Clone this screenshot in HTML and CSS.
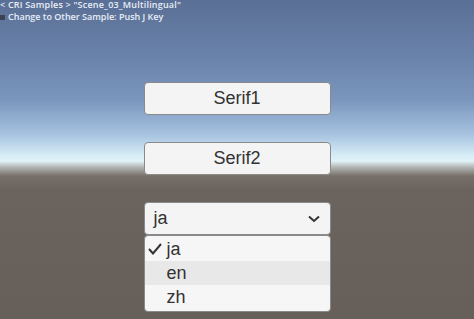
FILE: index.html
```html
<!DOCTYPE html>
<html lang="en">
<head>
    <meta charset="UTF-8">
    <title>Scene_03_Multilingual</title>
    <link rel="stylesheet" href="styles.css">
</head>
<body>

    <!-- 左上のデバッグ表示 -->
    <div class="info">
        <div class="info-line wide">&lt; CRI Samples &gt; "Scene_03_Multilingual"</div>
        <div class="info-line"><span class="mark"></span>Change to Other Sample: Push J Key</div>
    </div>

    <div class="panel">
        <button class="btn">Serif1</button>
        <button class="btn">Serif2</button>

        <div class="dropdown">
            <span>ja</span>
            <svg class="chevron" width="12" height="8" viewBox="0 0 12 8">
                <path d="M1 1.5 L6 6 L11 1.5" fill="none" stroke="#333" stroke-width="2"/>
            </svg>
        </div>

        <ul class="options">
            <li class="option">
                <svg class="check" width="14" height="12" viewBox="0 0 14 12">
                    <path d="M1 6 L5 10.5 L13 1" fill="none" stroke="#333" stroke-width="2"/>
                </svg>
                ja
            </li>
            <li class="option hover">en</li>
            <li class="option">zh</li>
        </ul>
    </div>

</body>
</html>
```

FILE: styles.css
```css
html, body { margin: 0; height: 319px; overflow: hidden; }

body
{
    font-family: "Liberation Sans", Arial, sans-serif;
    background: linear-gradient(to bottom,
        #5a6f96 0px, #6b84ab 60px, #7b96bd 100px, #a7c3e0 135px,
        #d6ecf6 155px, #e2f3f8 161px, #b3b7b6 167px, #777069 176px,
        #6b635e 190px, #665f5a 319px);
}

.info
{
    font-family: "Open Sans", sans-serif; font-weight: 600;
    font-size: 9px; color: #e8eef6; line-height: 12px;
    margin-top: -1px;
}

.info-line { white-space: nowrap; }
.info-line.wide { letter-spacing: 0.2px; }

.mark
{
    display: inline-block; width: 5px; height: 5px;
    background-color: #3c4250; margin-right: 3px; vertical-align: 0;
}

.panel
{
    display: flex; flex-direction: column; align-items: center;
    padding-top: 59px;
}

.btn
{
    width: 187px; height: 33px; box-sizing: border-box;
    background-color: #f4f4f4; border: 1px solid #8a8a8a; border-radius: 4px;
    font-family: "Liberation Sans", Arial, sans-serif; font-size: 18px; color: #323232;
    margin-bottom: 27px; padding: 0;
}

.dropdown
{
    width: 187px; height: 33px; box-sizing: border-box;
    background-color: #f4f4f4; border: 1px solid #8a8a8a; border-radius: 4px;
    display: flex; align-items: center; justify-content: space-between;
    padding: 0 10px 0 9px; font-size: 18px; color: #323232;
}

.chevron { margin-top: 1px; }

.options
{
    list-style: none; margin: 0; padding: 1px 0 2px 0;
    width: 187px; box-sizing: border-box;
    background-color: #f6f6f6; border: 1px solid #8a8a8a; border-radius: 4px;
}

.option
{
    height: 24px; display: flex; align-items: center;
    padding-left: 22px; position: relative;
    font-size: 18px; color: #323232;
}

.option.hover { background-color: #e8e8e8; }

.check { position: absolute; left: 3px; top: 6px; }
```
